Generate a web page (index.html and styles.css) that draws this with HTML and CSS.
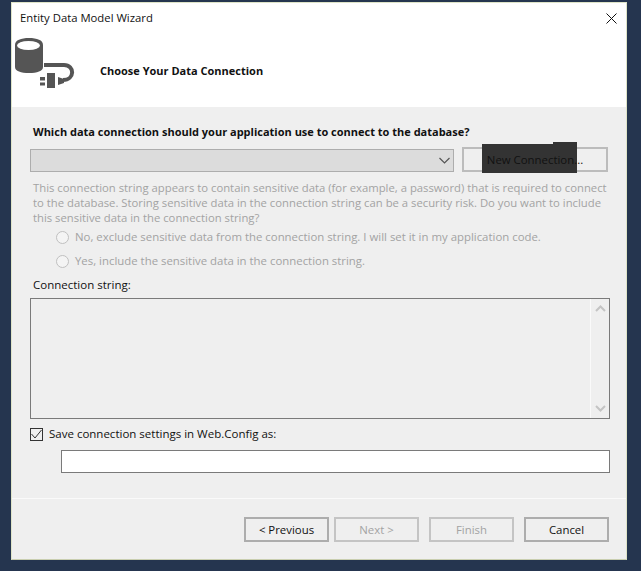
FILE: index.html
```html
<!DOCTYPE html>
<html lang="en">
<head>
<meta charset="utf-8">
<title>Entity Data Model Wizard</title>
<link rel="stylesheet" href="styles.css">
</head>
<body>
<div class="window">
  <header class="head">
    <div class="titlebar">
      <span class="title">Entity Data Model Wizard</span>
      <svg class="close" width="11" height="11" viewBox="0 0 11 11"><path d="M.5.5l10 10M10.5.5l-10 10" stroke="#111" stroke-width="1" fill="none"/></svg>
    </div>
    <div class="banner">
      <svg class="logo" width="60" height="52" viewBox="0 -1 60 52">
        <path d="M0 6C0 1 6-1 14-1S28 1 28 6V28C28 32 22 34 14 34S0 32 0 28Z" fill="#555"/>
        <ellipse cx="13.500" cy="6.500" rx="11.500" ry="4.500" fill="#fff"/>
        <path d="M29 26H49C60 26 60 41 48 41" fill="none" stroke="#555" stroke-width="4"/>
        <path d="M25 38h5v3.500h-5zM25 43.500h5v3h-5zM32 34h8v15h-8zM43 38l6 2v4l-6 2z" fill="#555"/>
      </svg>
      <h1 class="heading">Choose Your Data Connection</h1>
    </div>
  </header>
  <main class="content">
    <p class="question">Which data connection should your application use to connect to the database?</p>
    <div class="connrow">
      <div class="select">
        <svg width="11" height="7" viewBox="0 0 11 7"><path d="M.5 1l5 5 5-5" fill="none" stroke="#555" stroke-width="1.200"/></svg>
      </div>
      <div class="newconn">
        <span class="newlabel">New Connection...</span>
        <span class="scribble"></span>
        <span class="scribble-top"></span>
      </div>
    </div>
    <p class="warning">This connection string appears to contain sensitive data (for example, a password) that is required to connect to the database. Storing sensitive data in the connection string can be a security risk. Do you want to include this sensitive data in the connection string?</p>
    <div class="radios">
      <label class="radio"><span class="dot"></span>No, exclude sensitive data from the connection string. I will set it in my application code.</label>
      <label class="radio"><span class="dot"></span>Yes, include the sensitive data in the connection string.</label>
    </div>
    <div class="connlabel">Connection string:</div>
    <div class="textarea">
      <div class="scrollbar">
        <svg width="11" height="7" viewBox="0 0 11 7"><path d="M1 6l4.500-4.500L10 6" fill="none" stroke="#c4c4c4" stroke-width="2"/></svg>
        <svg width="11" height="7" viewBox="0 0 11 7"><path d="M1 1l4.500 4.500L10 1" fill="none" stroke="#c4c4c4" stroke-width="2"/></svg>
      </div>
    </div>
    <div class="save">
      <span class="check"><svg width="11" height="10" viewBox="0 0 11 10"><path d="M.5 5l3.500 4L10.500 1" fill="none" stroke="#333" stroke-width="1"/></svg></span>
      Save connection settings in Web.Config as:
    </div>
    <div class="saveinput"></div>
  </main>
  <footer class="footer">
    <div class="btn">&lt; Previous</div>
    <div class="btn off">Next &gt;</div>
    <div class="btn off finish">Finish</div>
    <div class="btn cancel">Cancel</div>
  </footer>
</div>
</body>
</html>
```
FILE: styles.css
```css
html, body { margin: 0; height: 571px; overflow: hidden; }
body { background: #25354f; font: 11.400px/16px "Open Sans", sans-serif; color: #111; padding: 2px 0 0 11px; box-sizing: border-box; }
.window { width: 616px; height: 558px; box-sizing: border-box; border: 1px solid #dfe4c8; border-bottom-color: #c9ceb0; background: #efefef; display: flex; flex-direction: column; }
.head { background: #fff; height: 104px; flex: none; }
.titlebar { display: flex; justify-content: space-between; align-items: center; padding: 7px 9px 0 8px; height: 23px; box-sizing: border-box; }
.title { font-size: 11.300px; }
.banner { display: flex; align-items: flex-start; padding-left: 3px; }
.logo { margin-top: 12px; flex: none; }
.heading { margin: 37px 0 0 25px; font-size: 11px; font-weight: 700; line-height: 16px; }
.content { padding: 17px 16px 0 18px; flex: 1; }
.question { margin: 0 0 0 3px; font-weight: 700; font-size: 11px; line-height: 16px; }
.connrow { display: flex; gap: 8px; margin-top: 9px; }
.select { width: 424px; height: 23px; box-sizing: border-box; border: 1px solid #adadad; background: #dcdcdc; display: flex; align-items: center; justify-content: flex-end; padding-right: 3px; }
.newconn { position: relative; width: 146px; height: 25px; margin-top: -2px; box-sizing: border-box; border: 2px solid #bcbcbc; display: flex; align-items: center; justify-content: center; }
.newlabel { position: relative; z-index: 1; }
.scribble { position: absolute; left: 18px; top: -5px; width: 95px; height: 29px; background: #333; }
.scribble-top { position: absolute; left: 89px; top: -7px; width: 24px; height: 3px; background: #333; }
.warning { margin: 8px 0 0 3px; color: #a3a3a3; line-height: 15px; width: 576px; font-size: 11.300px; }
.radios { margin: 4px 0 0 26px; display: flex; flex-direction: column; gap: 8px; }
.radio { display: flex; align-items: center; gap: 6px; color: #a3a3a3; height: 16px; }
.dot { width: 11px; height: 11px; border: 1px solid #c0c0c0; border-radius: 50%; background: #f4f4f4; flex: none; }
.connlabel { margin: 8px 0 0 3px; font-size: 11.500px; }
.textarea { margin-top: 5px; height: 121px; box-sizing: border-box; border: 1px solid #7a7a7a; display: flex; justify-content: flex-end; }
.scrollbar { width: 18px; border-left: 1px solid #fafafa; display: flex; flex-direction: column; justify-content: space-between; align-items: center; padding: 6px 0; }
.save { display: flex; align-items: center; gap: 6px; margin-top: 7px; height: 16px; font-size: 11.500px; }
.check { width: 11px; height: 11px; border: 1px solid #333; display: flex; align-items: center; justify-content: center; flex: none; }
.saveinput { margin: 8px 0 0 31px; height: 23px; box-sizing: border-box; border: 1px solid #7a7a7a; background: #fff; }
.footer { border-top: 1px solid #fafafa; height: 61px; box-sizing: border-box; flex: none; display: flex; align-items: flex-start; padding: 18px 0 0 232px; gap: 5px; }
.btn { width: 85px; height: 25px; box-sizing: border-box; border: 2px solid #adadad; display: flex; align-items: center; justify-content: center; }
.btn.off { color: #a3a3a3; border-color: #c4c4c4; }
.btn.finish { margin-left: 5px; }
.btn.cancel { margin-left: 5px; }
```
